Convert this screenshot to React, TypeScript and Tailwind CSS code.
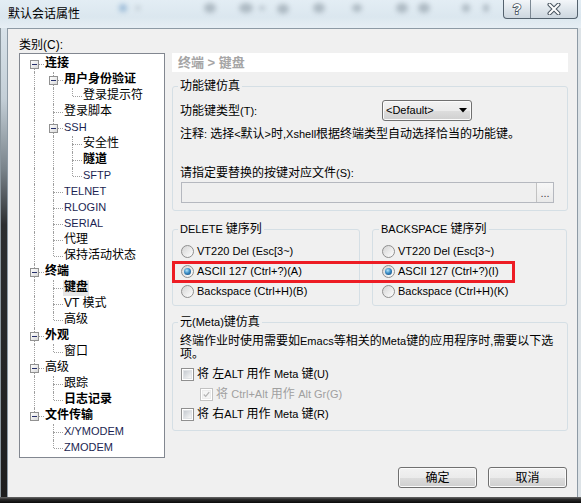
import React from "react";

type TreeItem = { t: string; l: number; b?: boolean; en?: boolean; sel?: boolean };

const items: TreeItem[] = [
  { t: "连接", l: 0, b: true },
  { t: "用户身份验证", l: 1, b: true },
  { t: "登录提示符", l: 2 },
  { t: "登录脚本", l: 1 },
  { t: "SSH", l: 1, en: true },
  { t: "安全性", l: 2 },
  { t: "隧道", l: 2, b: true },
  { t: "SFTP", l: 2, en: true },
  { t: "TELNET", l: 1, en: true },
  { t: "RLOGIN", l: 1, en: true },
  { t: "SERIAL", l: 1, en: true },
  { t: "代理", l: 1 },
  { t: "保持活动状态", l: 1 },
  { t: "终端", l: 0, b: true },
  { t: "键盘", l: 1, b: true, sel: true },
  { t: "VT 模式", l: 1 },
  { t: "高级", l: 1 },
  { t: "外观", l: 0, b: true },
  { t: "窗口", l: 1 },
  { t: "高级", l: 0 },
  { t: "跟踪", l: 1 },
  { t: "日志记录", l: 1, b: true },
  { t: "文件传输", l: 0, b: true },
  { t: "X/YMODEM", l: 1, en: true },
  { t: "ZMODEM", l: 1, en: true },
];

const hasNext = (i: number) => {
  const lv = items[i].l;
  for (let j = i + 1; j < items.length; j++) {
    if (items[j].l < lv) return false;
    if (items[j].l === lv) return true;
  }
  return false;
};

const hasKids = (i: number) => i + 1 < items.length && items[i + 1].l > items[i].l;

const dot = "absolute border-dotted border-[#a0a0a0]";

const TreeRow = ({ item, i }: { item: TreeItem; i: number }) => {
  const pass: boolean[] = [];
  for (let d = 0; d < item.l; d++) {
    let a = i - 1;
    while (a >= 0 && items[a].l !== d) a--;
    pass.push(a >= 0 && hasNext(a));
  }
  const top = !(item.l === 0 && i === 0);
  const bottom = hasNext(i);
  return (
    <div className="flex h-4 items-stretch">
      {pass.map((p, d) => (
        <div key={d} className="relative w-[19px] shrink-0">
          {p && <div className={`${dot} left-[9px] top-0 bottom-0 border-l`} />}
        </div>
      ))}
      <div className="relative w-[19px] shrink-0">
        {top && <div className={`${dot} left-[9px] top-0 h-[8px] border-l`} />}
        {bottom && <div className={`${dot} left-[9px] top-[8px] bottom-0 border-l`} />}
        <div className={`${dot} left-[10px] right-0 top-[8px] border-t`} />
        {hasKids(i) && (
          <div className="absolute left-[5px] top-[4px] flex h-[9px] w-[9px] items-center justify-center border border-[#919191] bg-[linear-gradient(135deg,#ffffff,#d9d9d9)]">
            <div className="h-px w-[5px] bg-[#26306a]" />
          </div>
        )}
      </div>
      <span
        className={`px-px leading-[15px] whitespace-nowrap ${item.b ? "font-bold" : ""} ${
          item.en ? "text-[11px] text-[#1c1f52]" : "text-[12px]"
        } ${item.sel ? "bg-[#e6e6e6]" : ""}`}
      >
        {item.t}
      </span>
    </div>
  );
};

const E = ({ children }: { children: React.ReactNode }) => <span className="text-[11px]">{children}</span>;

const Radio = ({ on, children }: { on?: boolean; children: React.ReactNode }) => (
  <div className="flex h-[20px] items-center">
    <span className="flex h-[13px] w-[13px] shrink-0 items-center justify-center rounded-full border border-[#8f8f8f] bg-[linear-gradient(135deg,#d4d4d4,#ffffff)]">
      {on && (
        <span className="h-[7px] w-[7px] rounded-full bg-[radial-gradient(circle_at_40%_35%,#b4e6fb_0%,#3b8dc6_45%,#0c3a69_100%)]" />
      )}
    </span>
    <span className="ml-[3px] text-[11px] whitespace-nowrap">{children}</span>
  </div>
);

const Check = ({ disabled, checked }: { disabled?: boolean; checked?: boolean }) => (
  <span
    className={`flex h-[13px] w-[13px] shrink-0 items-center justify-center border bg-white p-px ${
      disabled ? "border-[#c2c2c2]" : "border-[#8f8f8f]"
    }`}
  >
    <span
      className={`flex h-full w-full items-center justify-center border ${
        disabled
          ? "border-[#ececec] bg-[#f4f4f4]"
          : "border-[#dfe2e5] bg-[linear-gradient(135deg,#c6cbd1,#f6f6f6)]"
      }`}
    >
      {checked && (
        <svg width="9" height="9" viewBox="0 0 9 9">
          <path d="M1 4.5 L3.5 7 L8 1.5" fill="none" stroke="#b4b4b4" strokeWidth="1.6" />
        </svg>
      )}
    </span>
  </span>
);

const btn =
  "rounded-[3px] border border-[#707070] bg-[linear-gradient(180deg,#f2f2f2_0%,#ebebeb_50%,#dddddd_51%,#cfcfcf_100%)] shadow-[inset_0_0_0_1px_#fbfbfb]";

export default function App() {
  return (
    <div className="flex h-[503px] w-[581px] flex-col overflow-hidden font-['Liberation_Sans','Noto_Sans_CJK_SC',sans-serif] text-[12px] text-black">
      {/* title bar */}
      <div className="relative flex h-[28px] shrink-0 items-start bg-[linear-gradient(180deg,#e3edf4,#dbe7ef_60%,#e6eef4)] pl-[8px] pr-[3px]">
        <svg className="absolute inset-0 h-full w-full" viewBox="0 0 581 28" preserveAspectRatio="none">
          <defs>
            <filter id="blur" x="-100%" y="-100%" width="300%" height="300%">
              <feGaussianBlur stdDeviation="2.6" />
            </filter>
          </defs>
          <g filter="url(#blur)" fill="#7d8a95" opacity="0.5">
            <ellipse cx="123" cy="8" rx="4" ry="4" fill="#5d8fc0" />
            <ellipse cx="138" cy="8" rx="2" ry="2" />
            <ellipse cx="210" cy="8" rx="6" ry="5" />
            <ellipse cx="246" cy="8" rx="7" ry="5" />
            <ellipse cx="262" cy="8" rx="3" ry="2" />
            <ellipse cx="283" cy="9" rx="6" ry="5" />
            <ellipse cx="319" cy="8" rx="6" ry="5" />
            <ellipse cx="357" cy="8" rx="5" ry="4" />
            <ellipse cx="402" cy="8" rx="6" ry="5" />
            <ellipse cx="424" cy="8" rx="6" ry="5" />
            <ellipse cx="466" cy="8" rx="4" ry="4" />
            <ellipse cx="486" cy="8" rx="3" ry="4" />
          </g>
        </svg>
        <span className="relative mt-[6px] leading-4">默认会话属性</span>
        <div className="relative ml-auto flex h-[19px] overflow-hidden rounded-b-[4px] border-x border-b border-[#54626e] bg-[linear-gradient(180deg,#f3f6f9,#dfe6ec_50%,#cdd7df)]">
          <div className="flex w-[27px] items-center justify-center border-r border-[#7c8893]">
            <svg width="12" height="16" viewBox="0 0 12 16">
              <text
                x="6"
                y="13"
                textAnchor="middle"
                fontSize="14"
                fontWeight="bold"
                fontFamily="Liberation Sans, sans-serif"
                fill="#ffffff"
                stroke="#4a5661"
                strokeWidth="1.6"
                paintOrder="stroke"
              >
                ?
              </text>
            </svg>
          </div>
          <div className="flex w-[46px] items-center justify-center">
            <svg width="14" height="12" viewBox="0 0 14 12">
              <path d="M2.5 1.5 L11.5 10.5 M11.5 1.5 L2.5 10.5" stroke="#4a5661" strokeWidth="4" strokeLinecap="round" />
              <path d="M2.5 1.5 L11.5 10.5 M11.5 1.5 L2.5 10.5" stroke="#ffffff" strokeWidth="2" strokeLinecap="round" />
            </svg>
          </div>
        </div>
      </div>

      <div className="flex min-h-0 flex-1">
        {/* left frame */}
        <div className="w-[7px] shrink-0 border-l border-[#8a969e] bg-[linear-gradient(180deg,#d9e3ea_0%,#c4cfd7_15%,#7a848b_30%,#2c2e30_42%,#1e1e1e_100%)]" />

        {/* dialog body */}
        <div className="flex w-[571px] flex-col border-x border-t border-[#8d9aa5] bg-[#f0f0f0] pt-[8px] pl-[11px] pr-[9px]">
          <div className="h-4 leading-4">类别(C):</div>

          <div className="flex gap-[7px]">
            {/* tree */}
            <div className="h-[405px] w-[146px] shrink-0 border border-[#828790] bg-white pt-[2px] pl-[5px]">
              {items.map((it, i) => (
                <TreeRow key={i} item={it} i={i} />
              ))}
            </div>

            {/* right pane */}
            <div className="relative flex w-[396px] flex-col">
              <div className="h-[19px] bg-white pl-[6px] text-[13px] leading-[19px] font-bold text-[#a5a5a5]">
                终端 &gt; 键盘
              </div>

              <fieldset className="mt-[6px] rounded-[3px] border border-[#d5dfe5] px-[7px] pt-[6px] pb-[7px]">
                <legend className="-ml-[2px] px-[2px] leading-4">功能键仿真</legend>
                <div className="flex h-[21px] items-center">
                  <span className="w-[202px]">
                    功能键类型<E>(T):</E>
                  </span>
                  <div className={`${btn} flex h-[21px] w-[90px] items-center justify-between pl-[3px] pr-[4px]`}>
                    <span className="text-[11px]">&lt;Default&gt;</span>
                    <svg width="8" height="5" viewBox="0 0 8 5">
                      <path d="M0 0 H8 L4 4.5 Z" fill="#000" />
                    </svg>
                  </div>
                </div>
                <div className="mt-[5px] leading-4 whitespace-nowrap">
                  注释<E>: </E>选择<E>&lt;</E>默认<E>&gt;</E>时<E>,Xshell</E>根据终端类型自动选择恰当的功能键。
                </div>
                <div className="mt-[23px] leading-4">
                  请指定要替换的按键对应文件<E>(S):</E>
                </div>
                <div className="mt-px ml-px flex h-[21px] w-[373px] justify-end border border-[#b5b8bf] bg-[#efefef]">
                  <div className="flex w-[17px] items-end justify-center border-l border-[#c2c2c2] bg-[linear-gradient(180deg,#f7f7f7,#e9e9e9)] pb-[3px] text-[11px] leading-none text-[#444]">
                    ...
                  </div>
                </div>
              </fieldset>

              <div className="mt-[10px] flex gap-[12px]">
                <fieldset className="w-[188px] rounded-[3px] border border-[#d5dfe5] px-[7px] pt-[4px] pb-[4px]">
                  <legend className="-ml-[2px] px-[2px] leading-4">
                    <E>DELETE </E>键序列
                  </legend>
                  <div className="pl-px">
                    <Radio>VT220 Del (Esc[3~)</Radio>
                    <Radio on>ASCII 127 (Ctrl+?)(A)</Radio>
                    <Radio>Backspace (Ctrl+H)(B)</Radio>
                  </div>
                </fieldset>
                <fieldset className="w-[195px] rounded-[3px] border border-[#d5dfe5] px-[7px] pt-[4px] pb-[4px]">
                  <legend className="-ml-[1px] px-[2px] leading-4">
                    <E>BACKSPACE </E>键序列
                  </legend>
                  <div className="pl-[2px]">
                    <Radio>VT220 Del (Esc[3~)</Radio>
                    <Radio on>ASCII 127 (Ctrl+?)(I)</Radio>
                    <Radio>Backspace (Ctrl+H)(K)</Radio>
                  </div>
                </fieldset>
              </div>

              <fieldset className="mt-[8px] rounded-[3px] border border-[#d5dfe5] px-[7px] pt-[5px] pb-[6px]">
                <legend className="-ml-[2px] px-[2px] leading-4">
                  元<E>(Meta)</E>键仿真
                </legend>
                <div className="leading-[13px] whitespace-nowrap">
                  终端作业时使用需要如<E>Emacs</E>等相关的<E>Meta</E>键的应用程序时<E>,</E>需要以下选
                  <br />
                  项。
                </div>
                <div className="mt-[3px]">
                  <div className="flex h-[20px] items-center pl-px">
                    <Check />
                    <span className="ml-[3px] whitespace-nowrap">
                      将 左<E>ALT </E>用作 <E>Meta </E>键<E>(U)</E>
                    </span>
                  </div>
                  <div className="flex h-[20px] items-center pl-[20px] text-[#a0a0a0]">
                    <Check disabled checked />
                    <span className="ml-[3px] whitespace-nowrap">
                      将 <E>Ctrl+Alt </E>用作 <E>Alt Gr(G)</E>
                    </span>
                  </div>
                  <div className="flex h-[20px] items-center pl-px">
                    <Check />
                    <span className="ml-[3px] whitespace-nowrap">
                      将 右<E>ALT </E>用作 <E>Meta </E>键<E>(R)</E>
                    </span>
                  </div>
                </div>
              </fieldset>

              {/* red annotation box */}
              <div className="pointer-events-none absolute left-0 top-[208px] h-[22px] w-[343px] border-[3px] border-[#ed1c24]" />
            </div>
          </div>

          <div className="mt-[9px] flex justify-end gap-[11px] pr-px">
            <button className={`${btn} h-[21px] w-[79px] leading-none`}>确定</button>
            <button className={`${btn} h-[21px] w-[79px] leading-none`}>取消</button>
          </div>
        </div>

        {/* right frame */}
        <div className="w-[3px] shrink-0 bg-[#dde3e7]" />
      </div>

      {/* bottom frame */}
      <div className="h-[6px] shrink-0 bg-[linear-gradient(180deg,#6a6a6a_0%,#2a2a2a_40%,#0a0a0a_100%)]" />
    </div>
  );
}
